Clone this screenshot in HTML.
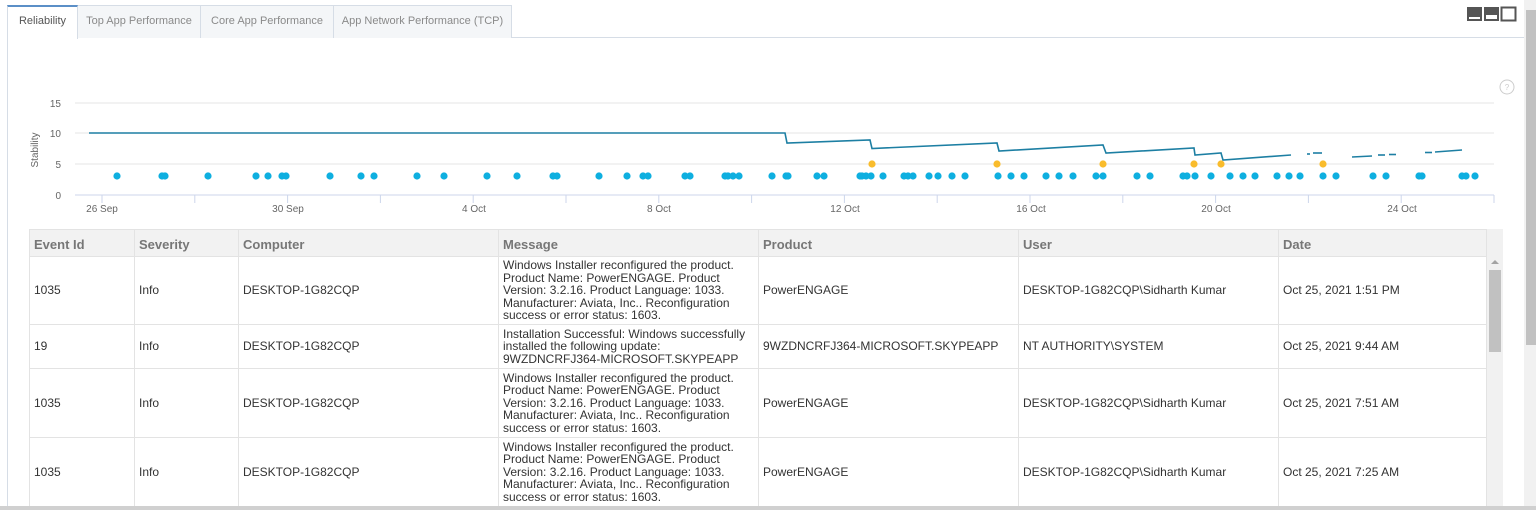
<!DOCTYPE html>
<html><head><meta charset="utf-8"><style>
*{margin:0;padding:0;box-sizing:border-box}
html,body{width:1536px;height:510px;overflow:hidden}
body{background:#fff;font-family:"Liberation Sans",Arial,sans-serif;position:relative}
.tabs{position:absolute;left:7px;top:5px;height:33px;display:flex}
.tab{height:33px;border:1px solid #d6dde6;border-bottom:none;background:#f4f6f8;color:#8a8a8a;font-size:11px;line-height:31px;text-align:center;margin-right:-1px;white-space:nowrap;overflow:hidden}
.tab.a{background:#fff;color:#555;border-top:2px solid #5b8fc7;line-height:29px;height:34px;position:relative;z-index:2}
.panel{position:absolute;left:7px;top:37px;width:1517px;height:470px;border:1px solid #d6dde6;border-right:none;border-bottom:none}
table{position:absolute;left:29px;top:229px;border-collapse:collapse;font-size:12px;color:#333;table-layout:fixed}
td,th{border:1px solid #e3e3e3;padding:0 4px;text-align:left;vertical-align:middle;line-height:12.5px}
th{background:#f2f2f2;color:#777;font-weight:bold;font-size:13px;height:27px;padding-top:4px}
</style></head><body>
<div class="panel"></div>
<div class="tabs"><div class="tab a" style="width:71px">Reliability</div><div class="tab" style="width:124px">Top App Performance</div><div class="tab" style="width:134px">Core App Performance</div><div class="tab" style="width:179px">App Network Performance (TCP)</div></div>
<svg style="position:absolute;left:1466px;top:6px" width="52" height="17"><rect x="1" y="1" width="15" height="14" fill="#555"/><rect x="3" y="11" width="11" height="2" fill="#fff"/><rect x="18" y="1" width="15" height="14" fill="#555"/><rect x="20" y="9" width="11" height="4" fill="#fff"/><rect x="35.5" y="1.5" width="14" height="13" fill="#fff" stroke="#555" stroke-width="2"/></svg>
<svg style="position:absolute;left:0;top:0" width="1536" height="228">
<circle cx="1507" cy="87" r="7" fill="none" stroke="#ccc"/><text x="1507" y="90" font-size="8" fill="#ccc" text-anchor="middle">?</text>
<g stroke="#e6e6e6"><line x1="75" y1="103" x2="1494" y2="103"/><line x1="75" y1="133" x2="1494" y2="133"/><line x1="75" y1="164" x2="1494" y2="164"/></g>
<line x1="75" y1="195" x2="1494" y2="195" stroke="#ccd6eb"/>
<g font-size="10" fill="#666" text-anchor="end"><text x="61" y="107">15</text><text x="61" y="137">10</text><text x="61" y="168">5</text><text x="61" y="199">0</text></g>
<text transform="translate(38,150) rotate(-90)" font-size="10" fill="#666" text-anchor="middle">Stability</text>
<g font-size="10" fill="#666" text-anchor="middle"><text x="102" y="212">26 Sep</text><text x="288" y="212">30 Sep</text><text x="474" y="212">4 Oct</text><text x="659" y="212">8 Oct</text><text x="845" y="212">12 Oct</text><text x="1031" y="212">16 Oct</text><text x="1216" y="212">20 Oct</text><text x="1402" y="212">24 Oct</text></g>
<g id="tk" stroke="#ccd6eb"></g>
<g fill="none" stroke="#1d7fa3" stroke-width="1.6">
<polyline points="89,133 785,133 787,143 870,140 872,148.5 997,143 999,151 1103,145 1106,153 1194,148 1195,155 1221,153 1223,160 1291,155"/>
<line x1="1307" y1="154" x2="1310" y2="154"/><line x1="1313" y1="153" x2="1322" y2="153"/><line x1="1352" y1="157" x2="1372" y2="156"/><line x1="1378" y1="155" x2="1385" y2="155"/><line x1="1389" y1="154.5" x2="1396" y2="154.5"/><line x1="1425" y1="152.5" x2="1432" y2="152.5"/><line x1="1435" y1="152" x2="1462" y2="150"/>
</g>
<g id="dots"></g>
</svg>
<table>
<colgroup><col style="width:105px"><col style="width:104px"><col style="width:260px"><col style="width:260px"><col style="width:260px"><col style="width:260px"><col style="width:208px"></colgroup>
<tr><th>Event Id</th><th>Severity</th><th>Computer</th><th>Message</th><th>Product</th><th>User</th><th>Date</th></tr>
<tr style="height:68px"><td>1035</td><td>Info</td><td>DESKTOP-1G82CQP</td><td>Windows Installer reconfigured the product. Product Name: PowerENGAGE. Product Version: 3.2.16. Product Language: 1033. Manufacturer: Aviata, Inc.. Reconfiguration success or error status: 1603.</td><td>PowerENGAGE</td><td>DESKTOP-1G82CQP\Sidharth Kumar</td><td>Oct 25, 2021 1:51 PM</td></tr>
<tr style="height:44px"><td>19</td><td>Info</td><td>DESKTOP-1G82CQP</td><td>Installation Successful: Windows successfully installed the following update: 9WZDNCRFJ364-MICROSOFT.SKYPEAPP</td><td>9WZDNCRFJ364-MICROSOFT.SKYPEAPP</td><td>NT AUTHORITY\SYSTEM</td><td>Oct 25, 2021 9:44 AM</td></tr>
<tr style="height:69px"><td>1035</td><td>Info</td><td>DESKTOP-1G82CQP</td><td>Windows Installer reconfigured the product. Product Name: PowerENGAGE. Product Version: 3.2.16. Product Language: 1033. Manufacturer: Aviata, Inc.. Reconfiguration success or error status: 1603.</td><td>PowerENGAGE</td><td>DESKTOP-1G82CQP\Sidharth Kumar</td><td>Oct 25, 2021 7:51 AM</td></tr>
<tr style="height:69px"><td>1035</td><td>Info</td><td>DESKTOP-1G82CQP</td><td>Windows Installer reconfigured the product. Product Name: PowerENGAGE. Product Version: 3.2.16. Product Language: 1033. Manufacturer: Aviata, Inc.. Reconfiguration success or error status: 1603.</td><td>PowerENGAGE</td><td>DESKTOP-1G82CQP\Sidharth Kumar</td><td>Oct 25, 2021 7:25 AM</td></tr>
</table>
<div style="position:absolute;left:1486px;top:229px;width:17px;height:281px;background:#f1f1f1;border-left:1px solid #e3e3e3"></div>
<div style="position:absolute;left:1489px;top:270px;width:12px;height:82px;background:#c1c1c1"></div>
<div style="position:absolute;left:1491px;top:260px;border:4px solid transparent;border-bottom-color:#a3a3a3;border-top:none;width:0"></div>
<div style="position:absolute;left:1524px;top:0;width:12px;height:510px;background:#f1f1f1"></div>
<div style="position:absolute;left:1526px;top:10px;width:10px;height:335px;background:#c1c1c1"></div>
<div style="position:absolute;left:0;top:506px;width:1536px;height:4px;background:#d0d0d0"></div>
<script>
var ns="http://www.w3.org/2000/svg",d=document.getElementById("dots"),t=document.getElementById("tk");
[117,162,165,208,256,268,282,286,330,361,374,417,444,487,517,553,557,599,627,643,648,685,690,725,728,733,739,772,786,788,817,824,860,862,866,871,883,904,908,913,929,938,952,965,998,1011,1024,1046,1059,1073,1096,1103,1137,1150,1183,1187,1195,1211,1230,1243,1255,1277,1289,1300,1323,1336,1373,1386,1419,1422,1462,1466,1475].forEach(function(x){var c=document.createElementNS(ns,"circle");c.setAttribute("cx",x);c.setAttribute("cy",176);c.setAttribute("r",3.6);c.setAttribute("fill","#0eafe0");d.appendChild(c)});
[872,997,1103,1194,1221,1323].forEach(function(x){var c=document.createElementNS(ns,"circle");c.setAttribute("cx",x);c.setAttribute("cy",164);c.setAttribute("r",3.6);c.setAttribute("fill","#f9bc2c");d.appendChild(c)});
for(var x=102;x<1494;x+=92.8){var l=document.createElementNS(ns,"line");l.setAttribute("x1",x);l.setAttribute("x2",x);l.setAttribute("y1",195);l.setAttribute("y2",203);t.appendChild(l)}
</script>
</body></html>
